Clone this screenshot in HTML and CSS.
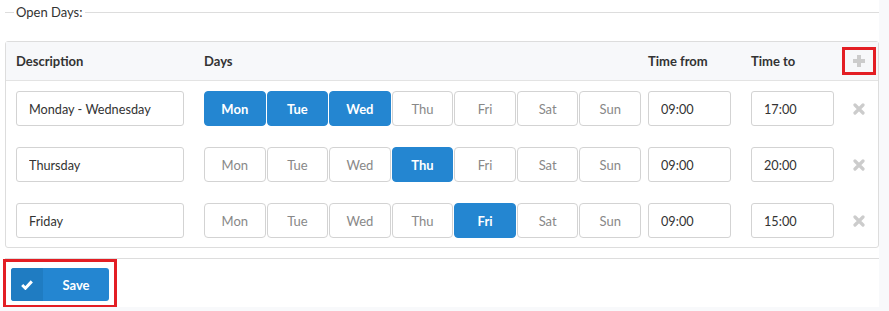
FILE: index.html
```html
<!DOCTYPE html>
<html lang="en">
<head>
<meta charset="UTF-8">
<title>Open Days</title>
<link rel="stylesheet" href="styles.css">
</head>
<body>
<div class="page">
  <div class="open-days">
    <div class="legend">Open Days:</div>

    <div class="panel">
      <div class="grid head">
        <div>Description</div>
        <div>Days</div>
        <div>Time from</div>
        <div>Time to</div>
        <div class="action">
          <span class="mark-small">
            <svg width="14" height="14" viewBox="0 0 14 14"><path d="M7 1v12M1 7h12" stroke="#cccccc" stroke-width="4"/></svg>
          </span>
        </div>
      </div>

      <div class="rows">
        <div class="grid">
          <input class="field desc" type="text" value="Monday - Wednesday">
          <div class="days">
            <span class="day on">Mon</span><span class="day on">Tue</span><span class="day on">Wed</span><span class="day">Thu</span><span class="day">Fri</span><span class="day">Sat</span><span class="day">Sun</span>
          </div>
          <input class="field time" type="text" value="09:00">
          <input class="field time" type="text" value="17:00">
          <div class="action"><svg width="12" height="12" viewBox="0 0 12 12"><path d="M2 2l8 8M10 2l-8 8" stroke="#cccccc" stroke-width="3.2" stroke-linecap="round"/></svg></div>
        </div>

        <div class="grid">
          <input class="field desc" type="text" value="Thursday">
          <div class="days">
            <span class="day">Mon</span><span class="day">Tue</span><span class="day">Wed</span><span class="day on">Thu</span><span class="day">Fri</span><span class="day">Sat</span><span class="day">Sun</span>
          </div>
          <input class="field time" type="text" value="09:00">
          <input class="field time" type="text" value="20:00">
          <div class="action"><svg width="12" height="12" viewBox="0 0 12 12"><path d="M2 2l8 8M10 2l-8 8" stroke="#cccccc" stroke-width="3.2" stroke-linecap="round"/></svg></div>
        </div>

        <div class="grid">
          <input class="field desc" type="text" value="Friday">
          <div class="days">
            <span class="day">Mon</span><span class="day">Tue</span><span class="day">Wed</span><span class="day">Thu</span><span class="day on">Fri</span><span class="day">Sat</span><span class="day">Sun</span>
          </div>
          <input class="field time" type="text" value="09:00">
          <input class="field time" type="text" value="15:00">
          <div class="action"><svg width="12" height="12" viewBox="0 0 12 12"><path d="M2 2l8 8M10 2l-8 8" stroke="#cccccc" stroke-width="3.2" stroke-linecap="round"/></svg></div>
        </div>
      </div>
    </div>
  </div>

  <div class="actions">
    <span class="mark-big">
      <button class="save" type="button">
        <span class="save-icon"><svg width="12" height="10" viewBox="0 0 12 10"><path d="M1.2 5l3.2 3.2 6.4-6.8" fill="none" stroke="#ffffff" stroke-width="3"/></svg></span>
        <span class="save-text">Save</span>
      </button>
    </span>
  </div>
</div>
</body>
</html>
```

FILE: styles.css
```css
body {
    margin: 0;
    background: #f8f9fb;
    font-family: Lato, "Open Sans", sans-serif;
    font-size: 13px;
    color: #333;
}
.page {
    width: 879px;
    height: 307px;
    background: #fff;
    padding-top: 4px;
    box-sizing: border-box;
}
.open-days {
    margin-left: 5px;
    padding-bottom: 10px;
    border-bottom: 1px solid #dddddd;
}
.legend {
    display: flex;
    align-items: center;
    gap: 2px;
    height: 16px;
    line-height: 16px;
}
.legend::before {
    content: "";
    width: 9px;
    border-top: 1px solid #dddddd;
}
.legend::after {
    content: "";
    flex: 1;
    border-top: 1px solid #dddddd;
}
.panel {
    margin-top: 21px;
    border: 1px solid #dddddd;
    border-radius: 3px;
}
.grid {
    display: grid;
    grid-template-columns: 188px 444px 103px 83px 1fr;
    align-items: center;
    padding-left: 10px;
}
.head {
    height: 38px;
    background: #f7f8fa;
    border-bottom: 1px solid #e3e3e3;
    font-weight: bold;
}
.rows {
    display: flex;
    flex-direction: column;
    gap: 21px;
    padding: 10px 0 9px;
}
.action {
    display: flex;
    justify-content: center;
    padding-left: 6px;
}
.mark-small {
    display: flex;
    align-items: center;
    justify-content: center;
    width: 28px;
    height: 22px;
    border: 3px solid #e31e24;
}
.field {
    box-sizing: border-box;
    height: 35px;
    border: 1px solid #d3d3d3;
    border-radius: 3px;
    padding: 0 12px;
    font-family: inherit;
    font-size: 12.7px;
    color: #333;
    background: #fff;
}
.desc {
    width: 168px;
}
.time {
    width: 83px;
}
.days {
    display: grid;
    grid-template-columns: repeat(7, 1fr);
    gap: 1px;
    width: 437px;
}
.day {
    box-sizing: border-box;
    height: 35px;
    display: flex;
    align-items: center;
    justify-content: center;
    border: 1px solid #d3d3d3;
    border-radius: 4px;
    color: #888;
}
.day.on {
    background: #2486d1;
    border-color: #2486d1;
    color: #fff;
    font-weight: bold;
}
.actions {
    padding-left: 3px;
}
.mark-big {
    display: inline-block;
    border: 3px solid #e31e24;
    padding: 6px 5px 4px;
}
.save {
    display: flex;
    width: 98px;
    height: 33px;
    padding: 0;
    border: none;
    border-radius: 3px;
    overflow: hidden;
    background: #2486d1;
    color: #fff;
    font-family: inherit;
    font-size: 13px;
    font-weight: bold;
}
.save-icon {
    width: 32px;
    display: flex;
    align-items: center;
    justify-content: center;
    background: #1f7cc2;
}
.save-text {
    flex: 1;
    display: flex;
    align-items: center;
    justify-content: center;
}
```
